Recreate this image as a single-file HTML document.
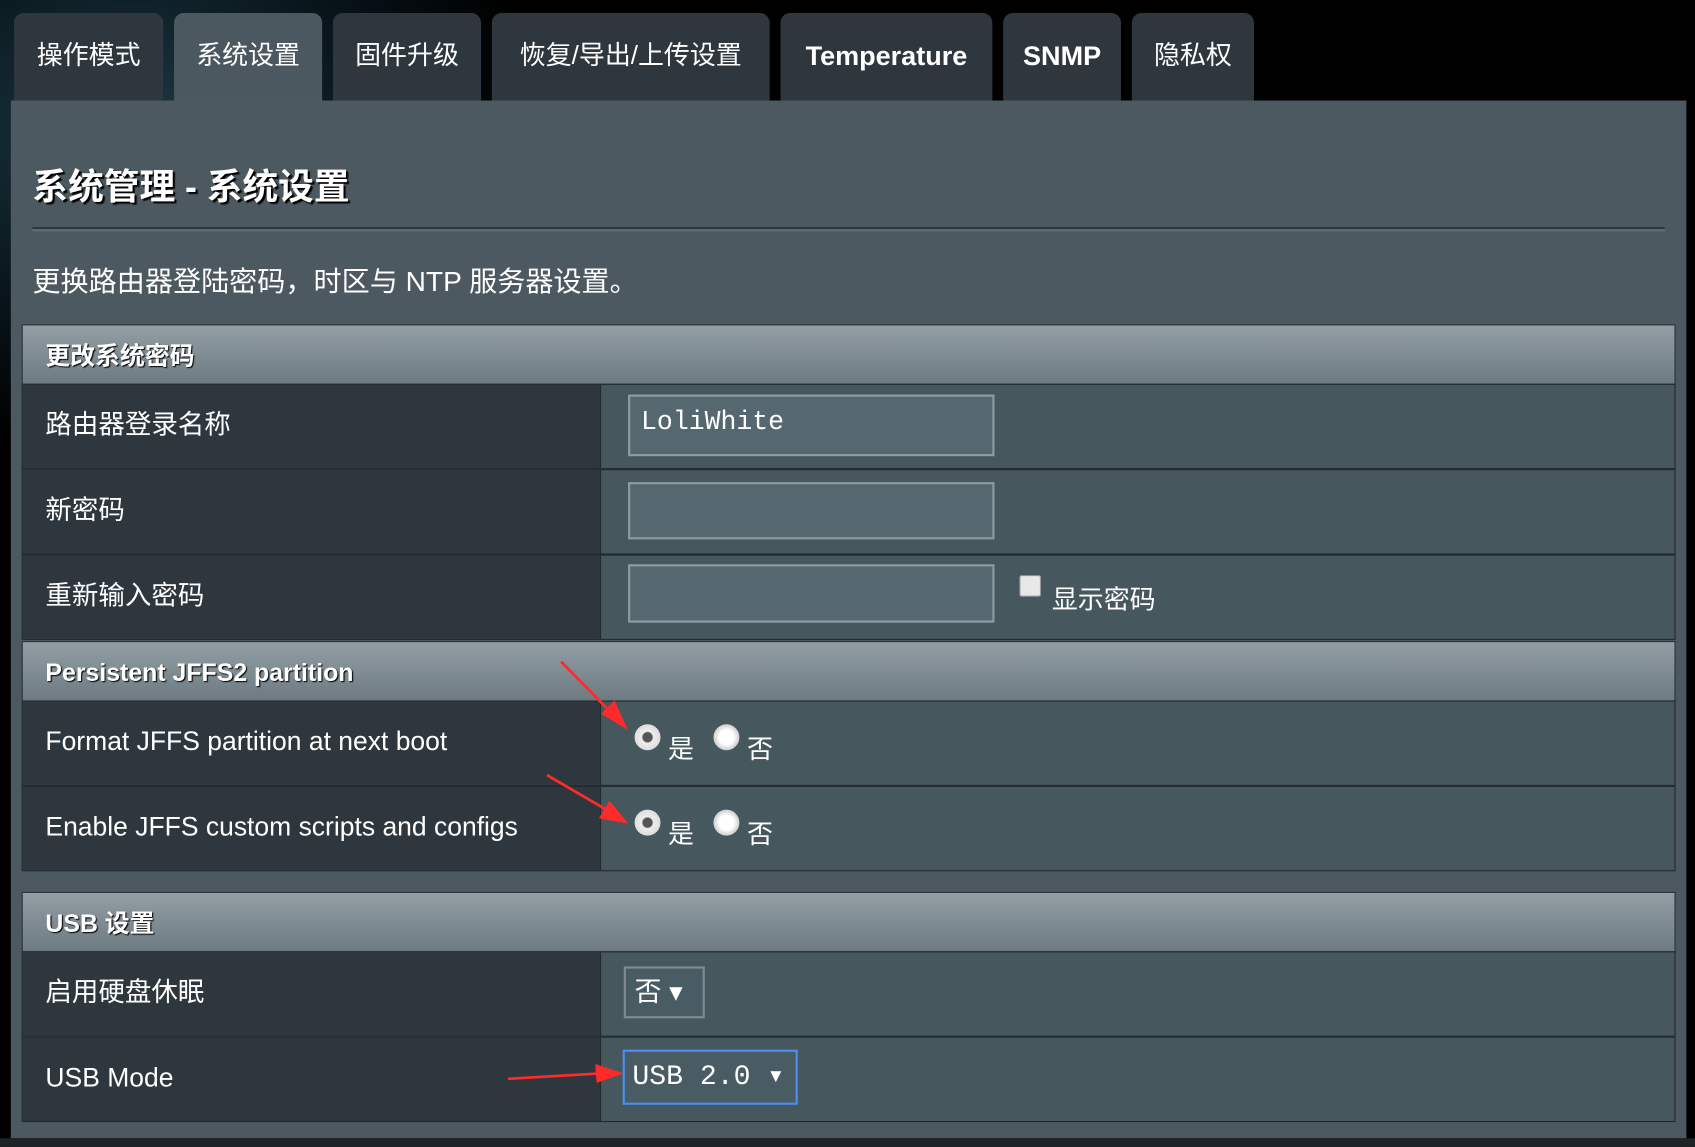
<!DOCTYPE html>
<html><head><meta charset="utf-8"><style>
*{box-sizing:border-box;margin:0;padding:0}
html,body{width:1695px;height:1147px;overflow:hidden;background:#000}
#w{position:absolute;left:0;top:0;width:1568px;height:1061px;transform:scale(1.081);transform-origin:0 0;font-family:"Liberation Sans","Noto Sans CJK SC",sans-serif;color:#fff;
background:radial-gradient(ellipse 380px 300px at 120px 120px,#1d3a44 0%,#08141a 60%,#000 100%)}
.tab{position:absolute;top:12px;height:82px;background:#2e373d;border-radius:9px 9px 0 0;font-size:24px;line-height:80px;text-align:center;color:#fff}
.tab.a{background:#4c585f}
#p{position:absolute;left:10px;top:93px;width:1550px;height:960px;background:#4d5960}
#bot{position:absolute;left:0;top:1053px;width:1568px;height:8px;background:#1e2326}
.t{position:absolute;left:30px;top:146px;font-size:33px;font-weight:bold;text-shadow:2px 2px 1px #000}
.hr1{position:absolute;left:30px;top:210px;width:1510px;height:2px;background:#2f383d}
.hr2{position:absolute;left:30px;top:212px;width:1510px;height:2px;background:#5f6f76}
.d{position:absolute;left:30px;top:240px;font-size:26px}
.h{position:absolute;left:20px;width:1530px;height:56px;background:linear-gradient(#939fa5,#6d7a81);border:1px solid #2a3236;font-size:23px;font-weight:bold;padding-left:21px;line-height:56px;text-shadow:1px 1px 1px #000}
.r{position:absolute;left:20px;width:1530px;height:79px;border:1px solid #22292c;background:#46575e}
.r .l{position:absolute;left:0;top:0;width:535px;height:100%;background:#2e373d;border-right:1px solid #22292c;font-size:24.5px;line-height:76px;padding-left:21px}
.in{position:absolute;left:581px;width:339px;height:57px;background:#56686f;border:2px solid #8e9ba0;font-family:"Liberation Mono",monospace;font-size:24.5px;padding-left:10px;line-height:50px}
.rad{position:absolute;width:24px;height:24px;border-radius:50%;background:radial-gradient(circle,#fff 0 40%,#ddd 60%,#aaa 100%)}
.rad.on{background:radial-gradient(circle,#555 0 25%,#eee 32%,#ddd 70%,#999 100%)}
.lb{position:absolute;font-size:24px}
.sel{position:absolute;background:#4a5c63;border:2px solid #7f8b8f;font-size:25px;line-height:44px;padding-left:8px}
</style></head><body><div id="w">
<div class="tab" style="left:13px;width:138px">操作模式</div>
<div class="tab a" style="left:161px;width:137px">系统设置</div>
<div class="tab" style="left:308px;width:137px">固件升级</div>
<div class="tab" style="left:455px;width:257px">恢复/导出/上传设置</div>
<div class="tab" style="left:722px;width:196px;font-weight:bold;font-size:25px">Temperature</div>
<div class="tab" style="left:928px;width:109px;font-weight:bold;font-size:25px">SNMP</div>
<div class="tab" style="left:1047px;width:113px">隐私权</div>
<div id="p"></div><div id="bot"></div>
<div class="t">系统管理 - 系统设置</div>
<div class="hr1"></div><div class="hr2"></div>
<div class="d">更换路由器登陆密码，时区与 NTP 服务器设置。</div>

<div class="h" style="top:300px">更改系统密码</div>
<div class="r" style="top:355px"><div class="l">路由器登录名称</div></div>
<div class="r" style="top:434px"><div class="l">新密码</div></div>
<div class="r" style="top:513px"><div class="l">重新输入密码</div></div>
<div class="in" style="top:365px">LoliWhite</div>
<div class="in" style="top:446px;height:53px"></div>
<div class="in" style="top:522px;height:54px"></div>
<div style="position:absolute;left:943px;top:532px;width:20px;height:20px;background:#e8e8e8;border:1px solid #999;border-radius:2px"></div>
<div class="lb" style="left:973px;top:535px">显示密码</div>

<div class="h" style="top:593px">Persistent JFFS2 partition</div>
<div class="r" style="top:648px"><div class="l">Format JFFS partition at next boot</div></div>
<div class="r" style="top:727px"><div class="l">Enable JFFS custom scripts and configs</div></div>
<div class="rad on" style="left:587px;top:670px"></div><div class="lb" style="left:618px;top:673px">是</div>
<div class="rad" style="left:660px;top:670px"></div><div class="lb" style="left:691px;top:673px">否</div>
<div class="rad on" style="left:587px;top:749px"></div><div class="lb" style="left:618px;top:752px">是</div>
<div class="rad" style="left:660px;top:749px"></div><div class="lb" style="left:691px;top:752px">否</div>

<div class="h" style="top:825px">USB 设置</div>
<div class="r" style="top:880px"><div class="l">启用硬盘休眠</div></div>
<div class="r" style="top:959px"><div class="l">USB Mode</div></div>
<div class="sel" style="left:577px;top:894px;width:75px;height:48px">否 ▾</div>
<div class="sel" style="left:576px;top:971px;width:162px;height:51px;border-color:#4a8ff0;font-family:'Liberation Mono',monospace;font-size:26px;line-height:46px;padding-left:7px">USB 2.0 ▾</div>

<svg style="position:absolute;left:0;top:0" width="1568" height="1061">
<g stroke="#ff2a2a" stroke-width="2.5" fill="#ff2a2a">
<line x1="519" y1="612" x2="568" y2="662"/><polygon points="578,672 558,660 568,650"/>
<line x1="506" y1="717" x2="566" y2="752"/><polygon points="578,760 556,756 564,743"/>
<line x1="470" y1="998" x2="555" y2="993"/><polygon points="573,993 553,1000 552,986"/>
</g></svg>
</div></body></html>
